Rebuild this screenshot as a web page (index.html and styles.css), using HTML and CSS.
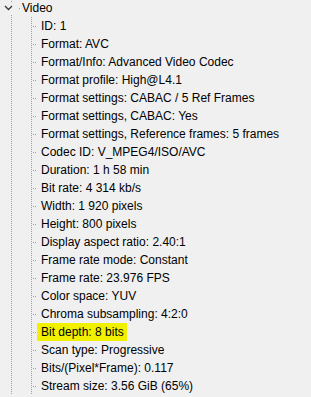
FILE: index.html
```html
<!DOCTYPE html>
<html lang="en">
<head>
    <meta charset="UTF-8">
    <meta name="viewport" content="width=device-width, initial-scale=1.0">
    <title>Video</title>
    <link rel="stylesheet" href="styles.css">
</head>
<body>
    <div class="tree">
        <div class="node open">
            <span class="expander">
                <svg width="9" height="6" viewBox="0 0 9 6"><path d="M1 1 L4.5 4.5 L8 1" fill="none" stroke="#3c3c3c" stroke-width="1.4"/></svg>
            </span>
            <span class="dot"></span>
            <span class="label">Video</span>
        </div>

        <div class="children">
            <div class="row"><span class="label">ID: 1</span></div>
            <div class="row"><span class="label">Format: AVC</span></div>
            <div class="row"><span class="label">Format/Info: Advanced Video Codec</span></div>
            <div class="row"><span class="label">Format profile: High@L4.1</span></div>
            <div class="row"><span class="label">Format settings: CABAC / 5 Ref Frames</span></div>
            <div class="row"><span class="label">Format settings, CABAC: Yes</span></div>
            <div class="row"><span class="label">Format settings, Reference frames: 5 frames</span></div>
            <div class="row"><span class="label">Codec ID: V_MPEG4/ISO/AVC</span></div>
            <div class="row"><span class="label">Duration: 1 h 58 min</span></div>
            <div class="row"><span class="label">Bit rate: 4 314 kb/s</span></div>
            <div class="row"><span class="label">Width: 1 920 pixels</span></div>
            <div class="row"><span class="label">Height: 800 pixels</span></div>
            <div class="row"><span class="label">Display aspect ratio: 2.40:1</span></div>
            <div class="row"><span class="label">Frame rate mode: Constant</span></div>
            <div class="row"><span class="label">Frame rate: 23.976 FPS</span></div>
            <div class="row"><span class="label">Color space: YUV</span></div>
            <div class="row"><span class="label">Chroma subsampling: 4:2:0</span></div>
            <div class="row"><span class="label selected">Bit depth: 8 bits</span></div>
            <div class="row"><span class="label">Scan type: Progressive</span></div>
            <div class="row"><span class="label">Bits/(Pixel*Frame): 0.117</span></div>
            <div class="row"><span class="label">Stream size: 3.56 GiB (65%)</span></div>
        </div>
    </div>
</body>
</html>
```

FILE: styles.css
```css
body {
    margin: 0;
    background-color: #f0f0f0;
    font-family: "Liberation Sans", Arial, sans-serif;
    font-size: 12px;
    color: #000;
    overflow: hidden;
}

.tree {
    margin-top: -1px;
    background-image: linear-gradient(to bottom, #a0a0a0 50%, transparent 50%);
    background-size: 1px 2px;
    background-position: 11px 0;
    background-repeat: repeat-y;
}

.node, .row {
    display: flex;
    align-items: center;
    height: 18px;
    white-space: nowrap;
}

.expander {
    display: flex;
    align-items: center;
    justify-content: center;
    width: 13px;
    height: 12px;
    margin-left: 2px;
    background-color: #f0f0f0;
}

.dot {
    width: 1px;
    height: 1px;
    margin-left: 4px;
    background-color: #a0a0a0;
}

.node .label {
    padding-left: 2px;
}

.children {
    background-image: linear-gradient(to bottom, #a0a0a0 50%, transparent 50%);
    background-size: 1px 2px;
    background-position: 31px 0;
    background-repeat: repeat-y;
}

.row {
    padding-left: 32px;
}

.row::before {
    content: "";
    width: 5px;
    height: 1px;
    background-image: linear-gradient(to right, transparent 50%, #a0a0a0 50%);
    background-size: 2px 1px;
}

.label {
    display: flex;
    align-items: center;
    height: 18px;
    padding: 0 3px 0 4px;
}

.selected {
    background-color: #f0f000;
}
```
